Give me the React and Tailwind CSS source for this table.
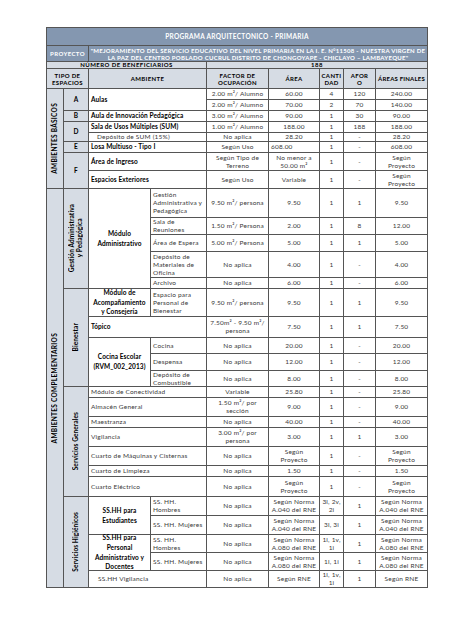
import React from 'react';
import { twMerge } from 'tailwind-merge';

// celda base: fondo blanco sobre la rejilla oscura (las líneas son el gap)
function C({ children, className = '', center = false }) {
  return (
    <div
      className={twMerge(
        'bg-white flex items-center pl-[2px] pr-0 leading-[8px] whitespace-nowrap',
        center ? 'justify-center text-center px-px' : 'justify-start',
        className
      )}
    >
      {children}
    </div>
  );
}

function Vals({ f, a, c, af, t, aLeft }) {
  return (
    <>
      <C center>{f}</C>
      {aLeft ? <C className="pl-[2px]">{a}</C> : <C center>{a}</C>}
      <C center>{c}</C>
      <C center>{af}</C>
      <C center>{t}</C>
    </>
  );
}

function Vert({ children, className = '' }) {
  return (
    <div className={twMerge('[writing-mode:vertical-rl] rotate-180 text-center whitespace-nowrap', className)}>
      {children}
    </div>
  );
}

const grey = 'bg-[#d6dce4]';
const bold = 'font-bold text-black text-[6.5px] tracking-[0.1px]';
const head = 'bg-[#d6dce4] font-bold text-black text-[6px] tracking-[0.35px] leading-[7px]';

export default function App() {
  return (
    <div className="w-[474px] h-[632px] bg-white pt-[27px] pl-[46px] font-[Lato,sans-serif] text-[6.5px] tracking-[0.2px] text-[#3a3a3a]">
      <div className="grid w-max gap-px p-px bg-[#555] grid-cols-[16px_24px_61px_55px_61px_50px_23px_31px_51px] grid-rows-[17px_15px_6px_19px_10px_10px_10px_10px_8px_10px_17px_17px_28px_16px_16px_25px_10px_27px_20px_15px_16px_15px_10px_18px_10px_18px_18px_10px_19px_18px_18px_17px_17px_16px]">
        {/* Título y proyecto */}
        <C center className="col-span-9 bg-[#8497b0] text-white font-bold text-[6.5px] tracking-[0.3px]">
          PROGRAMA ARQUITECTONICO - PRIMARIA
        </C>
        <C center className="col-span-2 bg-[#8497b0] text-white font-bold text-[6px] tracking-[0.4px]">
          PROYECTO
        </C>
        <C center className="col-span-7 bg-[#8497b0] text-white font-bold text-[6px] tracking-[0.27px] leading-[7px]">
          "MEJORAMIENTO DEL SERVICIO EDUCATIVO DEL NIVEL PRIMARIA EN LA I. E. N°11508 - NUESTRA VIRGEN DE
          <br />
          LA PAZ DEL CENTRO POBLADO CUCRUL DISTRITO DE CHONGOYAPE - CHICLAYO – LAMBAYEQUE"
        </C>
        <C center className="col-span-4 bg-[#d6dce4] font-bold text-black text-[6px] tracking-[0.45px] leading-[6px]">
          NÚMERO DE BENEFICIARIOS
        </C>
        <C center className="col-span-5 bg-[#d6dce4] font-bold text-black text-[6px] tracking-[0.45px] leading-[6px]">
          188
        </C>

        {/* Encabezados de columna */}
        <C center className={twMerge(head, 'col-span-2')}>TIPO DE<br />ESPACIOS</C>
        <C center className={twMerge(head, 'col-span-2')}>AMBIENTE</C>
        <C center className={head}>FACTOR DE<br />OCUPACIÓN</C>
        <C center className={head}>ÁREA</C>
        <C center className={head}>CANTI<br />DAD</C>
        <C center className={head}>AFOR<br />O</C>
        <C center className={twMerge(head, 'tracking-[0.2px]')}>ÁREAS FINALES</C>

        {/* Ambientes básicos */}
        <C center className="row-span-8 px-0 bg-[#d6dce4]">
          <Vert className="font-bold text-black text-[6.5px] tracking-[0.3px]">AMBIENTES BÁSICOS</Vert>
        </C>
        <C center className={twMerge('row-span-2', grey, bold)}>A</C>
        <C className={twMerge('row-span-2 col-span-2', bold)}>Aulas</C>
        <Vals f="2.00 m²/ Alumno" a="60.00" c="4" af="120" t="240.00" />
        <Vals f="2.00 m²/ Alumno" a="70.00" c="2" af="70" t="140.00" />

        <C center className={twMerge(grey, bold)}>B</C>
        <C className={twMerge('col-span-2', bold)}>Aula de Innovación Pedagógica</C>
        <Vals f="3.00 m²/ Alumno" a="90.00" c="1" af="30" t="90.00" />

        <C center className={twMerge('row-span-2', grey, bold)}>D</C>
        <C className={twMerge('col-span-2', bold)}>Sala de Usos Múltiples (SUM)</C>
        <Vals f="1.00 m²/ Alumno" a="188.00" c="1" af="188" t="188.00" />
        <C className="col-span-2 pl-[8px]">Depósito de SUM (15%)</C>
        <Vals f="No aplica" a="28.20" c="1" af="-" t="28.20" />

        <C center className={twMerge(grey, bold)}>E</C>
        <C className={twMerge('col-span-2', bold)}>Losa Multiuso - Tipo I</C>
        <Vals f="Según Uso" a="608.00" aLeft c="1" af="-" t="608.00" />

        <C center className={twMerge('row-span-2', grey, bold)}>F</C>
        <C className={twMerge('col-span-2', bold)}>Área de Ingreso</C>
        <Vals f={<>Según Tipo de<br />Terreno</>} a={<>No menor a<br />50.00 m²</>} c="1" af="-" t={<>Según<br />Proyecto</>} />
        <C className={twMerge('col-span-2', bold)}>Espacios Exteriores</C>
        <Vals f="Según Uso" a="Variable" c="1" af="-" t={<>Según<br />Proyecto</>} />

        {/* Ambientes complementarios */}
        <C center className="row-span-22 px-0 bg-[#d6dce4]">
          <Vert className="font-bold text-black text-[6.5px] tracking-[0.3px]">AMBIENTES COMPLEMENTARIOS</Vert>
        </C>

        {/* Gestión administrativa */}
        <C center className="row-span-5 px-0 bg-[#d6dce4]">
          <Vert className="font-bold text-black text-[6.5px] tracking-[0.1px] leading-[8px]">Gestión Administrativa<br />y Pedagógica</Vert>
        </C>
        <C center className={twMerge('row-span-5', bold)}>Módulo<br />Administrativo</C>
        <C>Gestión<br />Administrativa y<br />Pedagógica</C>
        <Vals f="9.50 m²/ persona" a="9.50" c="1" af="1" t="9.50" />
        <C>Sala de<br />Reuniones</C>
        <Vals f="1.50 m²/ Persona" a="2.00" c="1" af="8" t="12.00" />
        <C>Área de Espera</C>
        <Vals f="5.00 m²/ Persona" a="5.00" c="1" af="1" t="5.00" />
        <C>Depósito de<br />Materiales de<br />Oficina</C>
        <Vals f="No aplica" a="4.00" c="1" af="-" t="4.00" />
        <C>Archivo</C>
        <Vals f="No aplica" a="6.00" c="1" af="-" t="6.00" />

        {/* Bienestar */}
        <C center className="row-span-5 px-0 bg-[#d6dce4]">
          <Vert className="font-bold text-black text-[6.5px] tracking-[0.1px]">Bienestar</Vert>
        </C>
        <C center className={bold}>Módulo de<br />Acompañamiento<br />y Consejería</C>
        <C>Espacio para<br />Personal de<br />Bienestar</C>
        <Vals f="9.50 m²/ persona" a="9.50" c="1" af="1" t="9.50" />
        <C className={twMerge('col-span-2', bold)}>Tópico</C>
        <Vals f={<>7.50m² - 9.50 m²/<br />persona</>} a="7.50" c="1" af="1" t="7.50" />
        <C center className={twMerge('row-span-3', bold)}>Cocina Escolar<br />(RVM_002_2013)</C>
        <C>Cocina</C>
        <Vals f="No aplica" a="20.00" c="1" af="-" t="20.00" />
        <C>Despensa</C>
        <Vals f="No aplica" a="12.00" c="1" af="-" t="12.00" />
        <C>Depósito de<br />Combustible</C>
        <Vals f="No aplica" a="8.00" c="1" af="-" t="8.00" />

        {/* Servicios generales */}
        <C center className="row-span-7 px-0 bg-[#d6dce4]">
          <Vert className="font-bold text-black text-[6.5px] tracking-[0.1px]">Servicios Generales</Vert>
        </C>
        <C className="col-span-2">Módulo de Conectividad</C>
        <Vals f="Variable" a="25.80" c="1" af="-" t="25.80" />
        <C className="col-span-2">Almacén General</C>
        <Vals f={<>1.50 m²/ por<br />sección</>} a="9.00" c="1" af="-" t="9.00" />
        <C className="col-span-2">Maestranza</C>
        <Vals f="No aplica" a="40.00" c="1" af="-" t="40.00" />
        <C className="col-span-2">Vigilancia</C>
        <Vals f={<>3.00 m²/ por<br />persona</>} a="3.00" c="1" af="1" t="3.00" />
        <C className="col-span-2">Cuarto de Máquinas y Cisternas</C>
        <Vals f="No aplica" a={<>Según<br />Proyecto</>} c="1" af="-" t={<>Según<br />Proyecto</>} />
        <C className="col-span-2">Cuarto de Limpieza</C>
        <Vals f="No aplica" a="1.50" c="1" af="-" t="1.50" />
        <C className="col-span-2">Cuarto Eléctrico</C>
        <Vals f="No aplica" a={<>Según<br />Proyecto</>} c="1" af="-" t={<>Según<br />Proyecto</>} />

        {/* Servicios higiénicos */}
        <C center className="row-span-5 px-0 bg-[#d6dce4]">
          <Vert className="font-bold text-black text-[6.5px] tracking-[0.1px]">Servicios Higiénicos</Vert>
        </C>
        <C center className={twMerge('row-span-2', bold)}>SS.HH para<br />Estudiantes</C>
        <C>SS. HH.<br />Hombres</C>
        <Vals f="No aplica" a={<>Según Norma<br />A.040 del RNE</>} c={<>3l, 2v,<br />2i</>} af="1" t={<>Según Norma<br />A.040 del RNE</>} />
        <C>SS. HH. Mujeres</C>
        <Vals f="No aplica" a={<>Según Norma<br />A.040 del RNE</>} c="3l, 3i" af="1" t={<>Según Norma<br />A.040 del RNE</>} />
        <C center className={twMerge('row-span-2', bold)}>SS.HH para<br />Personal<br />Administrativo y<br />Docentes</C>
        <C>SS. HH.<br />Hombres</C>
        <Vals f="No aplica" a={<>Según Norma<br />A.080 del RNE</>} c={<>1l, 1v,<br />1i</>} af="1" t={<>Según Norma<br />A.080 del RNE</>} />
        <C>SS. HH. Mujeres</C>
        <Vals f="No aplica" a={<>Según Norma<br />A.080 del RNE</>} c="1l, 1i" af="1" t={<>Según Norma<br />A.080 del RNE</>} />
        <C className="col-span-2 pl-[9px]">SS.HH Vigilancia</C>
        <Vals f="No aplica" a="Según RNE" c={<>1l, 1v,<br />1i</>} af="1" t="Según RNE" />
      </div>
    </div>
  );
}
